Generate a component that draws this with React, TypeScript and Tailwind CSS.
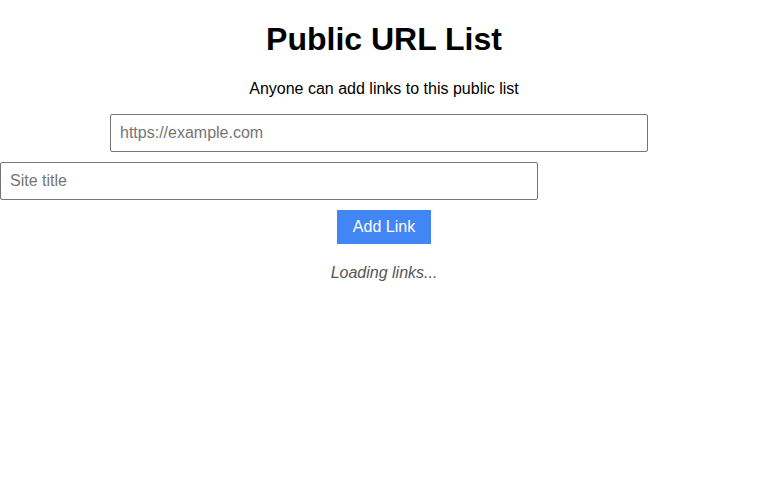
import React from "react";

export default function App() {
  return (
    <div className="min-h-screen bg-white font-['Liberation_Sans',Arial,sans-serif] text-black">
      <h1 className="pt-[21px] text-center text-[32px] font-bold leading-[37px]">
        Public URL List
      </h1>
      <p className="mt-[22px] text-center text-base leading-[18px]">
        Anyone can add links to this public list
      </p>
      <div className="mt-4 flex flex-col items-start">
        <input
          type="text"
          placeholder="https://example.com"
          className="ml-[110px] h-[38px] w-[538px] rounded-[2px] border border-[#767676] px-[9px] text-base placeholder:text-[#757575] outline-none"
        />
        <input
          type="text"
          placeholder="Site title"
          className="mt-[10px] h-[38px] w-[538px] rounded-[2px] border border-[#767676] px-[9px] text-base placeholder:text-[#757575] outline-none"
        />
      </div>
      <div className="mt-[10px] flex justify-center">
        <button className="h-[34px] bg-[#4285f4] px-4 text-base leading-[18px] text-white">
          Add Link
        </button>
      </div>
      <p className="mt-5 text-center text-base italic leading-[18px] text-[#555]">
        Loading links...
      </p>
    </div>
  );
}
